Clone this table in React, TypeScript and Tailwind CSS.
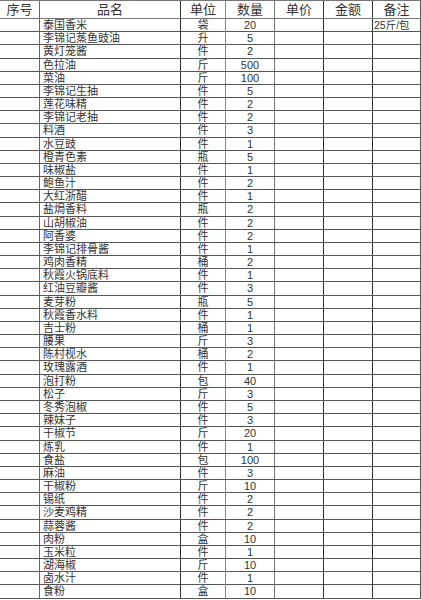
import React from "react";

type Row = [string, string, string, string?];

const rows: Row[] = [
  ["泰国香米", "袋", "20", "25斤/包"],
  ["李锦记蒸鱼豉油", "升", "5"],
  ["黄灯笼酱", "件", "2"],
  ["色拉油", "斤", "500"],
  ["菜油", "斤", "100"],
  ["李锦记生抽", "件", "5"],
  ["莲花味精", "件", "2"],
  ["李锦记老抽", "件", "2"],
  ["料酒", "件", "3"],
  ["水豆豉", "件", "1"],
  ["橙青色素", "瓶", "5"],
  ["味椒盐", "件", "1"],
  ["鲍鱼汁", "件", "2"],
  ["大红浙醋", "件", "1"],
  ["盐焗香料", "瓶", "2"],
  ["山胡椒油", "件", "2"],
  ["阿香婆", "件", "2"],
  ["李锦记排骨酱", "件", "1"],
  ["鸡肉香精", "桶", "2"],
  ["秋霞火锅底料", "件", "1"],
  ["红油豆瓣酱", "件", "3"],
  ["麦芽粉", "瓶", "5"],
  ["秋霞香水料", "件", "1"],
  ["吉士粉", "桶", "1"],
  ["腰果", "斤", "3"],
  ["陈村枧水", "桶", "2"],
  ["玫瑰露酒", "件", "1"],
  ["泡打粉", "包", "40"],
  ["松子", "斤", "3"],
  ["冬秀泡椒", "件", "5"],
  ["辣妹子", "件", "3"],
  ["干椒节", "斤", "20"],
  ["炼乳", "件", "1"],
  ["食盐", "包", "100"],
  ["麻油", "件", "3"],
  ["干椒粉", "斤", "10"],
  ["锡纸", "件", "2"],
  ["沙麦鸡精", "件", "2"],
  ["蒜蓉酱", "件", "2"],
  ["肉粉", "盒", "10"],
  ["玉米粒", "件", "1"],
  ["湖海椒", "斤", "10"],
  ["卤水汁", "件", "1"],
  ["食粉", "盒", "10"],
];

const cols = "grid grid-cols-[40px_141px_45px_49px_49px_49px_48px]";

export default function App() {
  return (
    <div
      className="w-[421px] h-[600px] bg-white overflow-hidden text-[#333]"
      style={{ fontFamily: '"Liberation Serif", "Noto Sans CJK SC", serif' }}
    >
      <div className={`${cols} h-[19px] border-t border-b border-[#777] text-[13px] leading-[17px]`}>
        <div className="border-r border-[#666] text-center">序号</div>
        <div className="border-r border-[#333] text-center">品名</div>
        <div className="border-r border-[#888] text-center">单位</div>
        <div className="border-r border-[#777] text-center">数量</div>
        <div className="border-r border-[#333] text-center">单价</div>
        <div className="border-r border-[#333] text-center">金额</div>
        <div className="border-r border-[#555] text-center">备注</div>
      </div>
      {rows.map((r, i) => (
        <div
          key={i}
          className={`${cols} h-[13.18px] border-b border-[#555] text-[11px] leading-[12.5px]`}
        >
          <div className="border-r border-[#666]" />
          <div className="border-r border-[#333] pl-[3px] whitespace-nowrap overflow-hidden">{r[0]}</div>
          <div className="border-r border-[#888] text-center">{r[1]}</div>
          <div
            className="border-r border-[#777] text-center"
            style={{ fontFamily: '"Liberation Sans", sans-serif' }}
          >
            {r[2]}
          </div>
          <div className="border-r border-[#333]" />
          <div className="border-r border-[#333]" />
          <div
            className="border-r border-[#555] pl-[1px] whitespace-nowrap text-[10.5px]"
            style={{ fontFamily: '"Liberation Sans", "Noto Sans CJK SC", sans-serif' }}
          >
            {r[3] ?? ""}
          </div>
        </div>
      ))}
    </div>
  );
}
